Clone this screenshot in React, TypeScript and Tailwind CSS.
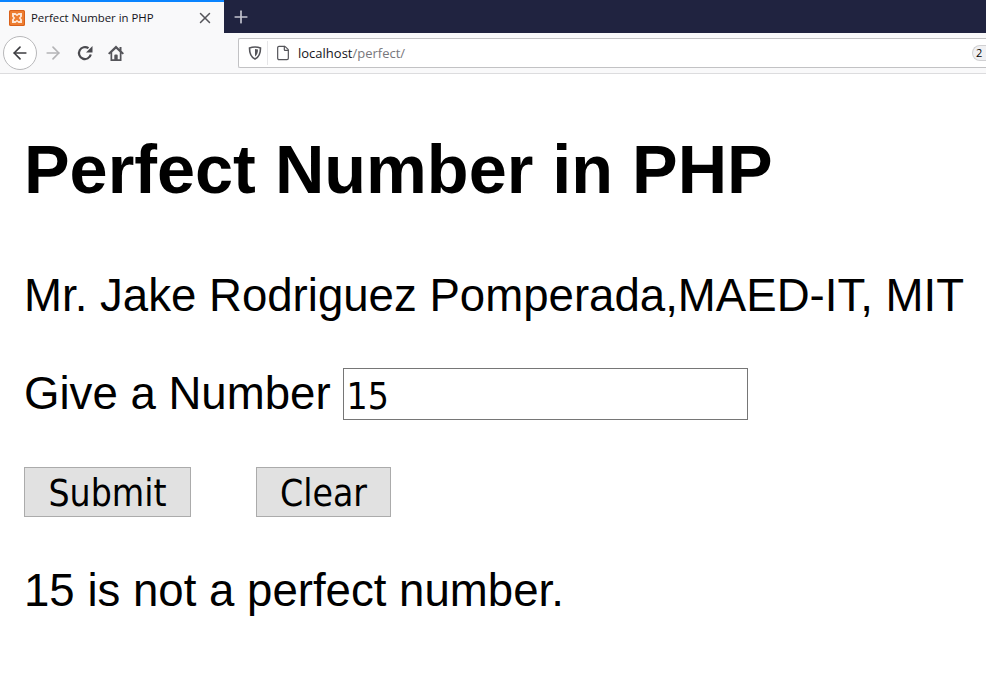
import { ArrowLeft, ArrowRight, File, Plus, X } from "lucide-react";

const sans = "font-['Liberation_Sans',Arial,sans-serif]";
const ui = "font-['Open_Sans','Noto_Sans',sans-serif]";
const control = "font-['DejaVu_Sans_Condensed','DejaVu_Sans',Tahoma,sans-serif] font-stretch-condensed";

function Favicon() {
  return (
    <svg viewBox="0 0 16 16" className="h-4 w-4 shrink-0">
      <rect width="16" height="16" rx="1.500" fill="#ed7d31" />
      <rect x="0.500" y="0.500" width="15" height="15" rx="1.500" fill="none" stroke="#d9601a" />
      <path d="M3 3h3.500L8 4.300 9.500 3H13v3.500L11.700 8 13 9.500V13H9.500L8 11.700 6.500 13H3V9.500L4.300 8 3 6.500z" fill="#fde6d6" />
      <path d="M5 5h1.500L8 6.300 9.500 5H11v1.500L9.700 8 11 9.500V11H9.500L8 9.700 6.500 11H5V9.500L6.300 8 5 6.500z" fill="#ed7d31" />
    </svg>
  );
}

function Shield() {
  return (
    <svg viewBox="0 0 16 16" className="h-4 w-4">
      <path d="M8 2c2 0 4 .4 5.500 1 0 5-1 9-5.500 11C3.500 12 2.500 8 2.500 3 4 2.400 6 2 8 2z" fill="none" stroke="#55555a" strokeWidth="1.600" />
      <path d="M8 4c1 0 2 .2 3 .5 0 3-.8 5.500-3 7z" fill="#55555a" />
    </svg>
  );
}

function Reload() {
  return (
    <svg viewBox="0 0 16 16" className="ml-[14px] h-4 w-4">
      <path d="M13.800 9.500A6 6 0 1 1 11.500 3.200" fill="none" stroke="#4a4a4f" strokeWidth="2.200" />
      <path d="M15.500 1v6.500H9z" fill="#4a4a4f" />
    </svg>
  );
}

function HomeIcon() {
  return (
    <svg viewBox="0 0 16 16" className="ml-[15px] h-4 w-4">
      <path d="M8 .5 0 8.200l1.400 1.400L2.500 8.600V16h11V8.600l1.100 1L16 8.200l-2.500-2.400V2h-2v1.900z" fill="#55555a" />
      <path d="M8 3.700 4.200 7.300V14.200h2.100v-3.700a1 1 0 0 1 1-1h1.400a1 1 0 0 1 1 1v3.700h2.100V7.300z" fill="#f9f9fa" />
    </svg>
  );
}

export default function App() {
  return (
    <div className="min-h-[684px] w-[986px] overflow-hidden bg-white text-black">
      <div className="flex h-[33px] bg-[#202340]">
        <div className={`flex w-[224px] items-center border-t-2 border-[#0a84ff] bg-[#f9f9fa] pl-[9px] pr-[10px] ${ui}`}>
          <Favicon />
          <span className="ml-[6px] flex-1 text-[11.400px] text-[#15141a]">Perfect Number in PHP</span>
          <X className="h-[18px] w-[18px] text-[#55555a]" strokeWidth={2} />
        </div>
        <div className="flex w-[34px] items-center justify-center">
          <Plus className="h-5 w-5 text-[#c4c5d0]" strokeWidth={2} />
        </div>
      </div>

      <div className="flex h-[41px] items-center border-b border-[#dcdcde] bg-[#f9f9fa]">
        <div className="ml-[3px] flex h-[34px] w-[34px] items-center justify-center rounded-full border border-[#b8b8ba] bg-white">
          <ArrowLeft className="h-[20px] w-[20px] text-[#3c3c40]" strokeWidth={2} />
        </div>
        <ArrowRight className="ml-[6px] h-[20px] w-[20px] text-[#b4b4b6]" strokeWidth={2} />
        <Reload />
        <HomeIcon />
        <div className={`ml-[114px] flex h-[30px] flex-1 items-center rounded-l-[2px] border border-r-0 border-[#c2c2c4] bg-white pl-[8px] ${ui}`}>
          <Shield />
          <div className="ml-[4px] h-[24px] w-px bg-[#e6e6e8]" />
          <File className="ml-[7px] h-4 w-4 text-[#55555a]" strokeWidth={1.800} />
          <span className="ml-[7px] flex-1 pt-px text-[13px] text-[#15141a]">
            localhost<span className="text-[#77777c]">/perfect/</span>
          </span>
          <div className="h-[16px] w-[14px] overflow-hidden rounded-l-full border border-r-0 border-[#d0d0d2] bg-[#f0f0f2] pl-[3px] text-[11px] leading-[14px]">2</div>
        </div>
      </div>

      <main className={`px-6 ${sans}`}>
        <h1 className="mt-[50px] whitespace-nowrap text-[68.400px] leading-[90px] font-bold">Perfect Number in PHP</h1>
        <p className="mt-[54px] whitespace-nowrap text-[45.600px] leading-[55px]">Mr. Jake Rodriguez Pomperada,MAED-IT, MIT</p>
        <form className="mt-[45px]">
          <div className="flex items-center">
            <label className="text-[45.600px] leading-[52px]">Give a Number</label>
            <input
              readOnly
              value="15"
              className={`ml-[12px] h-[52px] w-[405px] border border-[#767676] px-[3px] pt-[5px] text-[37px] outline-none ${control}`}
            />
          </div>
          <div className={`mt-[47px] flex gap-[65px] text-[37px] ${control}`}>
            <button type="button" className="h-[50px] w-[167px] border border-[#ababab] bg-[#e1e1e1] pt-[3px] leading-none">Submit</button>
            <button type="button" className="h-[50px] w-[135px] border border-[#ababab] bg-[#e1e1e1] pt-[3px] leading-none">Clear</button>
          </div>
        </form>
        <p className="mt-[46px] text-[45.600px] leading-[55px]">15 is not a perfect number.</p>
      </main>
    </div>
  );
}
